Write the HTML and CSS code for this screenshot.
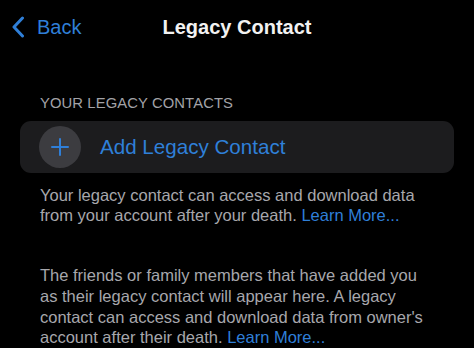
FILE: index.html
```html
<!DOCTYPE html>
<html>
<head>
<meta charset="utf-8">
<link rel="stylesheet" href="styles.css">
</head>
<body>
<div class="screen">
  <header class="nav">
    <a class="back">
      <svg class="chev" width="14" height="22" viewBox="0 0 14 22"><path d="M11.5 2 L3 11 L11.5 20" fill="none" stroke="#2f7fd8" stroke-width="3" stroke-linecap="round" stroke-linejoin="round"/></svg>
      <span>Back</span>
    </a>
    <h1 class="title">Legacy Contact</h1>
  </header>
  <div class="section-label">YOUR LEGACY CONTACTS</div>
  <div class="card">
    <div class="plus-circle">
      <svg width="18" height="18" viewBox="0 0 18 18"><path d="M9 1 V17 M1 9 H17" stroke="#2f7fd8" stroke-width="2" stroke-linecap="round"/></svg>
    </div>
    <span class="add-label">Add Legacy Contact</span>
  </div>
  <div class="note">
    <span class="line">Your legacy contact can access and download data</span>
    <span class="line"><span>from your account after your death.</span> <span class="link">Learn More...</span></span>
  </div>
  <div class="note note2">
    <span class="line">The friends or family members that have added you</span>
    <span class="line">as their legacy contact will appear here. A legacy</span>
    <span class="line">contact can access and download data from owner's</span>
    <span class="line"><span>account after their death.</span> <span class="link">Learn More...</span></span>
  </div>
</div>
</body>
</html>
```
FILE: styles.css
```css
html, body {
  margin: 0;
  padding: 0;
  background: #000;
}
.screen {
  width: 474px;
  height: 348px;
  overflow: hidden;
  background: #000;
  font-family: "Liberation Sans", Arial, sans-serif;
  color: #fff;
}
.nav {
  position: relative;
  height: 52px;
  display: flex;
  align-items: center;
  justify-content: center;
}
.back {
  position: absolute;
  left: 11px;
  top: 15px;
  display: flex;
  align-items: center;
  gap: 12px;
  color: #2f7fd8;
  font-size: 20px;
  line-height: 24px;
}
.chev {
  display: block;
}
.title {
  margin: 0;
  font-size: 20px;
  line-height: 24px;
  font-weight: 700;
  color: #f2f2f2;
  margin-top: 1px;
}
.section-label {
  margin-top: 42px;
  padding-left: 40px;
  font-size: 14.8px;
  line-height: 18px;
  color: #a3a3a8;
  letter-spacing: 0.1px;
}
.card {
  margin: 9px 20px 0 20px;
  height: 52px;
  background: #1c1c1e;
  border-radius: 11px;
  display: flex;
  align-items: center;
  padding-left: 19px;
  gap: 19px;
}
.plus-circle {
  width: 42px;
  height: 42px;
  border-radius: 50%;
  background: #3c3c40;
  display: flex;
  align-items: center;
  justify-content: center;
}
.add-label {
  color: #2f80d9;
  font-size: 20.6px;
  line-height: 24px;
}
.note {
  margin: 12px 0 0 0;
  padding: 0 40px;
  font-size: 16.5px;
  line-height: 20px;
  color: #a7a7ac;
  display: flex;
  flex-direction: column;
}
.line {
  display: block;
  white-space: nowrap;
}
.note2 {
  margin-top: 40px;
  line-height: 20.8px;
}
.link {
  color: #2f7fd8;
}
```
